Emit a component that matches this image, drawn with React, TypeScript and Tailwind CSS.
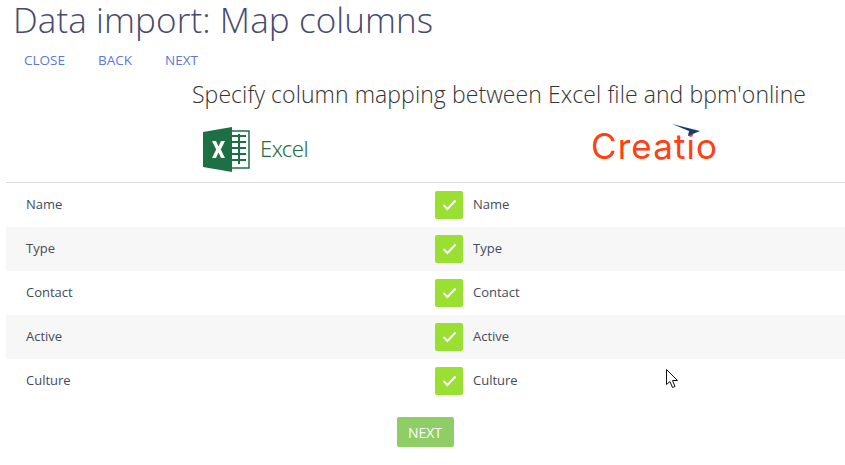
import React from 'react';

const rows = ['Name', 'Type', 'Contact', 'Active', 'Culture'];

const ExcelIcon = () => (
  <svg width="47" height="46" viewBox="0 0 47 46">
    <path d="M0 5 L29 0 V45 L0 40 Z" fill="#1d7044" />
    <path d="M29 4 H46 V41 H29" fill="none" stroke="#1d7044" strokeWidth="1.5" />
    <path d="M29 9 H43 M29 15 H43 M29 21 H43 M29 27 H43 M29 33 H43 M36 7 V37" stroke="#1d7044" strokeWidth="2" fill="none" />
    <path d="M9 14 H13 L15.5 19.5 L18 14 H22 L17.8 22.5 L22 31 H18 L15.5 25.5 L13 31 H9 L13.2 22.5 Z" fill="#fff" />
  </svg>
);

const CheckTile = () => (
  <div className="w-7 h-7 rounded-[2px] bg-[#99e032] flex items-center justify-center shrink-0">
    <svg width="15" height="12" viewBox="0 0 15 12">
      <path d="M1.5 6 L5.5 10 L13.5 1.5" fill="none" stroke="#fff" strokeWidth="2" />
    </svg>
  </div>
);

const CursorIcon = () => (
  <svg width="14" height="20" viewBox="0 0 14 20" className="absolute left-[666px] top-[369px]">
    <path d="M0.5 0.5 V15.5 L4 12.5 L6.5 18.5 L9 17.5 L6.5 11.5 H11.5 Z" fill="#fff" stroke="#111" strokeWidth="1" />
  </svg>
);

export default function App() {
  return (
    <div className="relative w-[845px] h-[465px] overflow-hidden bg-white font-['Open_Sans',sans-serif] text-[#444b5c]">
      <h1 className="pl-[13px] h-[42px] text-[35px] leading-[39px] font-light text-[#454a6f] tracking-[0.1px] whitespace-nowrap">
        Data import: Map columns
      </h1>
      <div className="flex gap-[33px] pl-6 mt-[9px] h-[18px] text-[13.5px] leading-[18px] text-[#5b79d8]">
        <span>CLOSE</span>
        <span>BACK</span>
        <span>NEXT</span>
      </div>
      <div className="pl-[192px] mt-[9px] h-[32px] text-[23px] leading-[32px] font-light text-[#333] tracking-[0.08px] whitespace-nowrap">
        Specify column mapping between Excel file and bpm'online
      </div>
      <div className="flex h-[73px] ml-[6px] border-b border-[#ddd]">
        <div className="w-[197px] shrink-0" />
        <div className="flex items-start gap-[10px] w-[388px] shrink-0 pt-[17px]">
          <ExcelIcon />
          <span className="mt-[6px] text-[22px] leading-[30px] font-light text-[#1d7044] font-['Noto_Sans',sans-serif] tracking-[-0.5px]">Excel</span>
        </div>
        <div className="relative">
          <span className="block mt-[14px] text-[35px] leading-[44px] text-[#ff4013] font-['Inter',sans-serif] tracking-[1.1px]">Creatio</span>
          <svg width="30" height="13" viewBox="0 0 30 13" className="absolute left-[81px] top-[14px]">
            <path d="M0 0 L28 7 L16 12 L17 7 Z" fill="#1b3a6b" />
          </svg>
        </div>
      </div>
      <div className="ml-[6px]">
        {rows.map((row, i) => (
          <div key={row} className={`flex items-center h-11 text-[13px] ${i % 2 === 1 ? 'bg-[#f7f7f7]' : ''}`}>
            <span className="w-[429px] shrink-0 pl-5">{row}</span>
            <CheckTile />
            <span className="ml-[10px]">{row}</span>
          </div>
        ))}
      </div>
      <div className="flex justify-center mt-[14px] pl-[5px]">
        <button className="w-[57px] h-[30px] rounded-[2px] bg-[#8fcd66] text-white text-[14px]">NEXT</button>
      </div>
      <CursorIcon />
    </div>
  );
}
